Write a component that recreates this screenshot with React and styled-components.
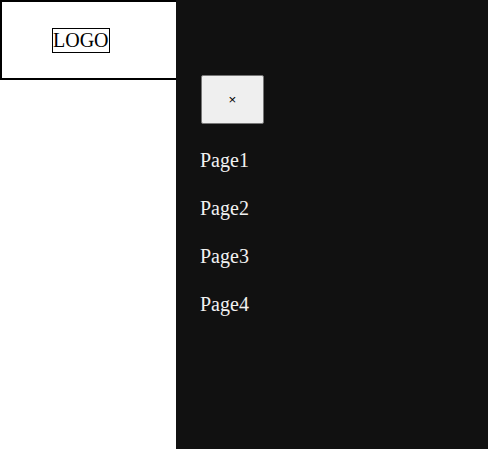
import React, { useState } from "react";
import styled, { createGlobalStyle } from "styled-components";

const GlobalStyle = createGlobalStyle`
  html, body {
    margin: 0;
    padding: 0;
    background: #fff;
    font-family: "Liberation Serif", "Times New Roman", serif;
  }
`;

const pages = ["Page1", "Page2", "Page3", "Page4"];

function App() {
  const [open, setOpen] = useState(true);

  return (
    <>
      <GlobalStyle />
      <Header>
        <Logo>LOGO</Logo>
      </Header>
      <Sidebar $open={open}>
        <CloseButton onClick={() => setOpen(false)}>×</CloseButton>
        <NavList>
          {pages.map((page) => (
            <NavLink key={page} href="#">
              {page}
            </NavLink>
          ))}
        </NavList>
      </Sidebar>
    </>
  );
}

export default App;

const Header = styled.header`
  box-sizing: border-box;
  height: 80px;
  border: 2px solid #000;
  background: #fff;
  display: flex;
  align-items: center;
  padding-left: 50px;
`;

const Logo = styled.div`
  border: 1px solid #000;
  font-size: 20px;
  line-height: 23px;
  color: #000;
`;

const Sidebar = styled.nav`
  position: fixed;
  top: 0;
  right: 0;
  box-sizing: border-box;
  width: 312px;
  height: 100vh;
  background: #111;
  padding: 75px 0 0 24px;
  display: ${(p) => (p.$open ? "block" : "none")};
`;

const CloseButton = styled.button`
  display: block;
  box-sizing: border-box;
  width: 63px;
  height: 49px;
  margin-left: 1px;
  background: #efefef;
  border: 1px solid #767676;
  border-radius: 2px;
  font-family: "Liberation Sans", Arial, sans-serif;
  font-size: 13.33px;
  color: #000;
  cursor: pointer;
`;

const NavList = styled.div`
  display: flex;
  flex-direction: column;
  align-items: flex-start;
  gap: 25px;
  margin-top: 25px;
`;

const NavLink = styled.a`
  font-size: 20px;
  line-height: 23px;
  color: #f1f1f1;
  text-decoration: none;
`;
